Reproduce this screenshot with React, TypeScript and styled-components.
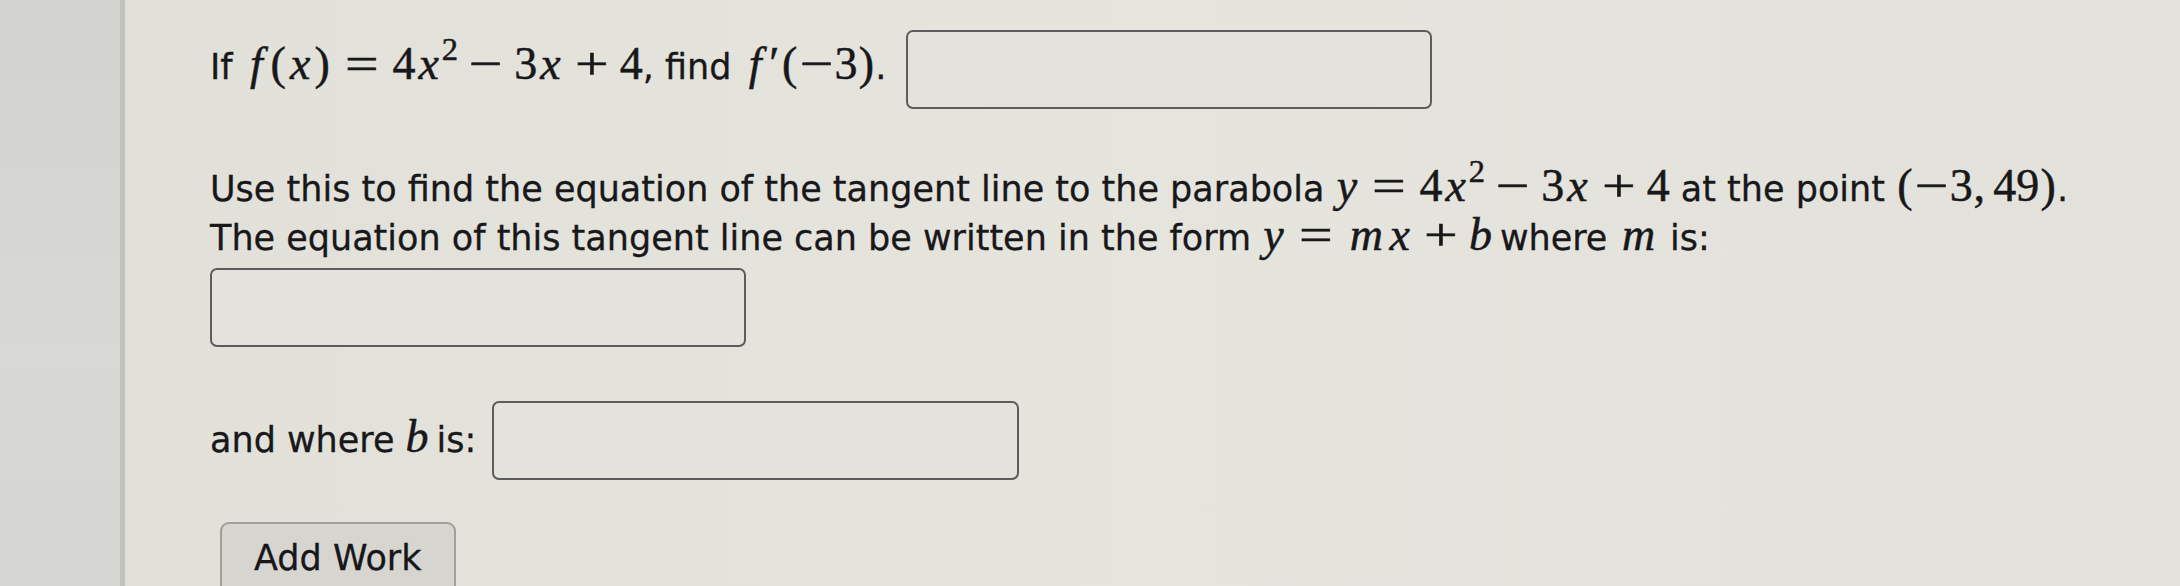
import React from "react";
import styled, { createGlobalStyle } from "styled-components";

const Global = createGlobalStyle`
  html, body {
    margin: 0;
    padding: 0;
    width: 2180px;
    height: 586px;
    overflow: hidden;
    background: #e2e1da;
  }
  #root { height: 586px; }
`;

const Page = styled.div`
  display: flex;
  height: 586px;
  overflow: hidden;
  font-family: "DejaVu Sans", Verdana, sans-serif;
  font-size: 35px;
  line-height: 49px;
  color: #18181a;
  -webkit-text-stroke: 0.3px #18181a;
`;

const Sidebar = styled.div`
  width: 120px;
  flex: none;
  background: linear-gradient(180deg, #d2d2cf 0%, #d8d8d5 60%, #d5d5d2 100%);
  border-right: 5px solid #c0c0bc;
  box-shadow: 2px 0 3px rgba(0, 0, 0, 0.1);
`;

const Main = styled.div`
  flex: 1;
  display: flex;
  flex-direction: column;
  align-items: flex-start;
  padding: 30px 0 0 85px;
  background: linear-gradient(90deg, #e1e0d9 0%, #e5e4dd 50%, #e2e1db 100%);

  & > * {
    flex-shrink: 0;
  }
`;

const Row = styled.div<{ $gap: number }>`
  display: flex;
  align-items: center;
  gap: ${(p) => p.$gap}px;
`;

const Prompt = styled.span<{ $lift?: number }>`
  white-space: nowrap;
  margin-bottom: ${(p) => p.$lift ?? 0}px;
`;

const Paragraph = styled.p`
  margin: 56px 0 5px;
  white-space: nowrap;
`;

const AnswerBox = styled.div<{ $w: number }>`
  width: ${(p) => p.$w}px;
  height: 79px;
  box-sizing: border-box;
  border: 2px solid #5c5c5c;
  border-radius: 7px;
  background: #e3e2dc;
`;

const Spacer = styled.div<{ $h: number }>`
  height: ${(p) => p.$h}px;
`;

const Button = styled.button`
  margin-left: 10px;
  margin-top: -2px;
  padding: 10px 32px 16px;
  font-family: "DejaVu Sans", Verdana, sans-serif;
  font-size: 35px;
  line-height: 49px;
  color: #17171a;
  -webkit-text-stroke: 0.3px #17171a;
  background: #d6d5cf;
  border: 2px solid #a09f9a;
  border-radius: 9px;
`;

/* math typesetting */
const Math = styled.span`
  font-family: "Liberation Serif", "Times New Roman", serif;
  font-size: 46px;
  line-height: 0;
  white-space: nowrap;
  -webkit-text-stroke: 0.5px #18181a;
`;

const G = styled.span<{ $w: number; $i?: boolean }>`
  display: inline-block;
  width: ${(p) => p.$w}em;
  text-align: center;
  font-style: ${(p) => (p.$i ? "italic" : "normal")};
`;

const Op = styled.span<{ $sp: number }>`
  display: inline-block;
  width: 0.778em;
  margin: 0 ${(p) => p.$sp}em;
  text-align: center;
  transform: scaleX(1.3);
`;

const Sup = styled.span`
  display: inline-block;
  width: 0.5em;
  font-size: 0.707em;
  vertical-align: 19px;
  text-align: center;
`;

const REL = 0.278;
const BIN = 0.222;

const Poly = () => (
  <>
    <G $w={0.5}>4</G>
    <G $w={0.572} $i>x</G>
    <Sup>2</Sup>
    <Op $sp={BIN}>−</Op>
    <G $w={0.5}>3</G>
    <G $w={0.572} $i>x</G>
    <Op $sp={BIN}>+</Op>
    <G $w={0.5}>4</G>
  </>
);

export default function App() {
  return (
    <>
      <Global />
      <Page>
        <Sidebar />
        <Main>
          <Row $gap={20}>
            <Prompt $lift={4}>
              If{" "}
              <Math>
                <G $w={0.55} $i>f</G>
                <G $w={0.389}>(</G>
                <G $w={0.572} $i>x</G>
                <G $w={0.389}>)</G>
                <Op $sp={REL}>=</Op>
                <Poly />
              </Math>
              , find{" "}
              <Math>
                <G $w={0.55} $i>f</G>
                <G $w={0.28}>′</G>
                <G $w={0.389}>(</G>
                <Op $sp={0}>−</Op>
                <G $w={0.5}>3</G>
                <G $w={0.389}>)</G>
              </Math>
              .
            </Prompt>
            <AnswerBox $w={526} />
          </Row>

          <Paragraph>
            Use this to find the equation of the tangent line to the parabola{" "}
            <Math>
              <G $w={0.49} $i>y</G>
              <Op $sp={REL}>=</Op>
              <Poly />
            </Math>{" "}
            at the point{" "}
            <Math>
              <G $w={0.389}>(</G>
              <Op $sp={0}>−</Op>
              <G $w={0.5}>3</G>
              <G $w={0.278}>,</G>
              <G $w={0.167} />
              <G $w={0.5}>4</G>
              <G $w={0.5}>9</G>
              <G $w={0.389}>)</G>
            </Math>
            .
            <br />
            The equation of this tangent line can be written in the form{" "}
            <Math>
              <G $w={0.49} $i>y</G>
              <Op $sp={REL}>=</Op>
              <G $w={0.878} $i>m</G>
              <G $w={0.572} $i>x</G>
              <Op $sp={BIN}>+</Op>
              <G $w={0.429} $i>b</G>
            </Math>{" "}
            where{" "}
            <Math>
              <G $w={0.878} $i>m</G>
            </Math>{" "}
            is:
          </Paragraph>

          <AnswerBox $w={536} />

          <Spacer $h={54} />

          <Row $gap={16}>
            <Prompt>
              and where{" "}
              <Math>
                <G $w={0.429} $i>b</G>
              </Math>{" "}
              is:
            </Prompt>
            <AnswerBox $w={527} />
          </Row>

          <Spacer $h={44} />

          <Button type="button">Add Work</Button>
        </Main>
      </Page>
    </>
  );
}
